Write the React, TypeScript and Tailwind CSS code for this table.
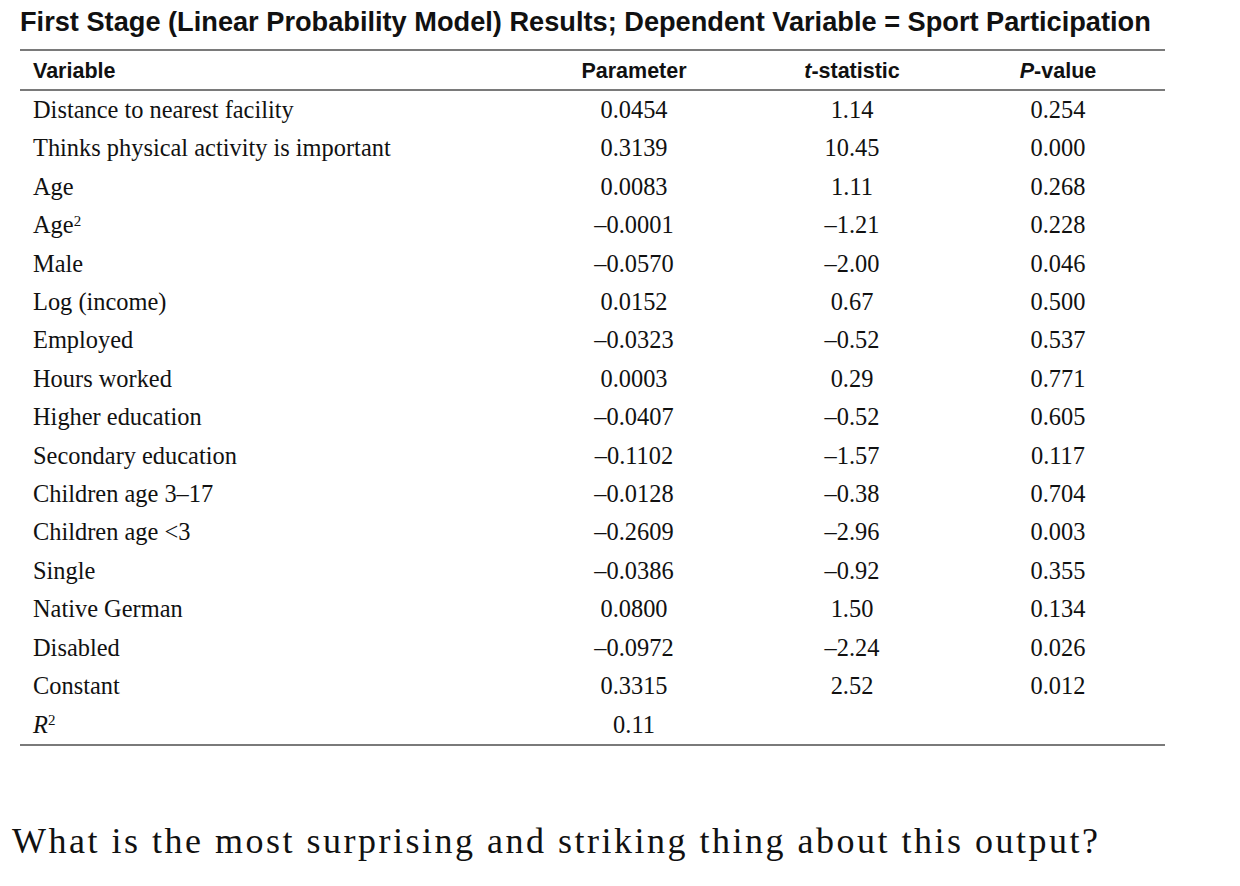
import React from "react";

type Row = { name: React.ReactNode; param: string; t?: string; p?: string };

const rows: Row[] = [
  { name: "Distance to nearest facility", param: "0.0454", t: "1.14", p: "0.254" },
  { name: "Thinks physical activity is important", param: "0.3139", t: "10.45", p: "0.000" },
  { name: "Age", param: "0.0083", t: "1.11", p: "0.268" },
  { name: <>Age<sup className="text-[15px]">2</sup></>, param: "–0.0001", t: "–1.21", p: "0.228" },
  { name: "Male", param: "–0.0570", t: "–2.00", p: "0.046" },
  { name: "Log (income)", param: "0.0152", t: "0.67", p: "0.500" },
  { name: "Employed", param: "–0.0323", t: "–0.52", p: "0.537" },
  { name: "Hours worked", param: "0.0003", t: "0.29", p: "0.771" },
  { name: "Higher education", param: "–0.0407", t: "–0.52", p: "0.605" },
  { name: "Secondary education", param: "–0.1102", t: "–1.57", p: "0.117" },
  { name: "Children age 3–17", param: "–0.0128", t: "–0.38", p: "0.704" },
  { name: "Children age <3", param: "–0.2609", t: "–2.96", p: "0.003" },
  { name: "Single", param: "–0.0386", t: "–0.92", p: "0.355" },
  { name: "Native German", param: "0.0800", t: "1.50", p: "0.134" },
  { name: "Disabled", param: "–0.0972", t: "–2.24", p: "0.026" },
  { name: "Constant", param: "0.3315", t: "2.52", p: "0.012" },
  { name: <><i>R</i><sup className="text-[15px]">2</sup></>, param: "0.11" },
];

const sans = "font-['Liberation_Sans',Arial,sans-serif]";
const serif = "font-['Liberation_Serif','Times_New_Roman',serif]";

function Cells({ row }: { row: Row }) {
  return (
    <>
      <div className="w-[486px] shrink-0 pl-[13px]">{row.name}</div>
      <div className="w-[256px] shrink-0 text-center">{row.param}</div>
      <div className="w-[180px] shrink-0 text-center">{row.t ?? ""}</div>
      <div className="w-[232px] shrink-0 text-center">{row.p ?? ""}</div>
    </>
  );
}

export default function App() {
  return (
    <div className="w-[1240px] h-[886px] bg-white text-black overflow-hidden">
      <div className="pl-[20px] pt-[6px] w-[1165px]">
        <h1 className={`${sans} font-bold text-[27.2px] leading-[32px] whitespace-nowrap text-[#111]`}>
          First Stage (Linear Probability Model) Results; Dependent Variable = Sport Participation
        </h1>
        <div className="mt-[11px] border-t-2 border-[#7a7a7a]">
          <div className={`${sans} font-bold text-[21.5px] leading-[38px] pt-[1px] flex text-[#111]`}>
            <div className="w-[486px] shrink-0 pl-[13px]">Variable</div>
            <div className="w-[256px] shrink-0 text-center">Parameter</div>
            <div className="w-[180px] shrink-0 text-center"><i>t</i>-statistic</div>
            <div className="w-[232px] shrink-0 text-center"><i>P</i>-value</div>
          </div>
          <div className="border-t-2 border-[#7a7a7a] -mt-[1px]">
            {rows.map((r, i) => (
              <div key={i} className={`${serif} text-[24.4px] leading-[38.4px] flex text-[#111]`}>
                <Cells row={r} />
              </div>
            ))}
          </div>
          <div className="border-t-2 border-[#7a7a7a]" />
        </div>
      </div>
      <p className={`${serif} text-[36px] leading-[40px] tracking-[2.5px] pl-[12px] mt-[75px] whitespace-nowrap text-[#111]`}>
        What is the most surprising and striking thing about this output?
      </p>
    </div>
  );
}
